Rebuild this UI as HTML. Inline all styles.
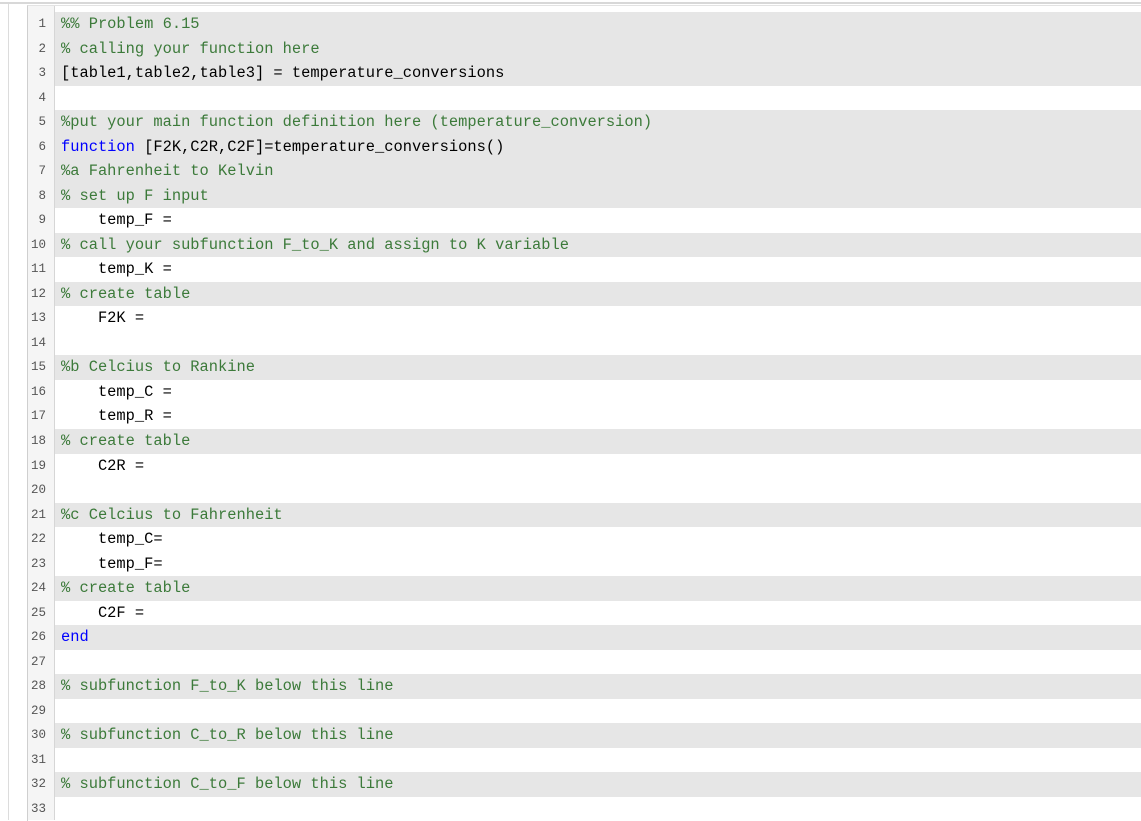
<!DOCTYPE html>
<html><head><style>
html,body{margin:0;padding:0;background:#fff;width:1141px;height:820px;overflow:hidden}
.top{position:absolute;left:0;top:2px;width:1141px;height:2px;background:#d8d8d8}
.vl{position:absolute;left:8px;top:4px;width:1px;height:816px;background:#dcdcdc}
.box{position:absolute;left:27px;top:5px;width:1114px;height:815px;border-left:1px solid #cfcfcf;border-top:1px solid #e3e3e3}
.gut{position:absolute;left:28px;top:6px;width:26px;height:814px;background:#f5f5f5;border-right:1px solid #d6d6d6}
.ln{position:absolute;left:28px;width:18px;text-align:right;font:12.5px "Liberation Mono",monospace;line-height:24.53px;color:#555}
.row{position:absolute;left:55px;width:1086px;height:24.53px;font:15.4px "Liberation Mono",monospace;line-height:24.53px;color:#000;white-space:pre;padding-left:6px;box-sizing:border-box}
.g{background:#e6e6e6}
.c{color:#3c7a3a}
.k{color:#0000ff}
</style></head><body>
<div class="top"></div><div class="vl"></div><div class="box"></div><div class="gut"></div>
<div id="c"></div>
<script>
var L=[
['g','<span class="c">%% Problem 6.15</span>'],
['g','<span class="c">% calling your function here</span>'],
['g','[table1,table2,table3] = temperature_conversions'],
['',''],
['g','<span class="c">%put your main function definition here (temperature_conversion)</span>'],
['g','<span class="k">function</span> [F2K,C2R,C2F]=temperature_conversions()'],
['g','<span class="c">%a Fahrenheit to Kelvin</span>'],
['g','<span class="c">% set up F input</span>'],
['','    temp_F ='],
['g','<span class="c">% call your subfunction F_to_K and assign to K variable</span>'],
['','    temp_K ='],
['g','<span class="c">% create table</span>'],
['','    F2K ='],
['',''],
['g','<span class="c">%b Celcius to Rankine</span>'],
['','    temp_C ='],
['','    temp_R ='],
['g','<span class="c">% create table</span>'],
['','    C2R ='],
['',''],
['g','<span class="c">%c Celcius to Fahrenheit</span>'],
['','    temp_C='],
['','    temp_F='],
['g','<span class="c">% create table</span>'],
['','    C2F ='],
['g','<span class="k">end</span>'],
['',''],
['g','<span class="c">% subfunction F_to_K below this line</span>'],
['',''],
['g','<span class="c">% subfunction C_to_R below this line</span>'],
['',''],
['g','<span class="c">% subfunction C_to_F below this line</span>'],
['','']];
var h='';
for(var i=0;i<L.length;i++){var t=12+i*24.53;
h+='<div class="row '+L[i][0]+'" style="top:'+t+'px">'+L[i][1]+'</div>';
h+='<div class="ln" style="top:'+t+'px">'+(i+1)+'</div>';}
document.getElementById('c').innerHTML=h;
</script>
</body></html>
